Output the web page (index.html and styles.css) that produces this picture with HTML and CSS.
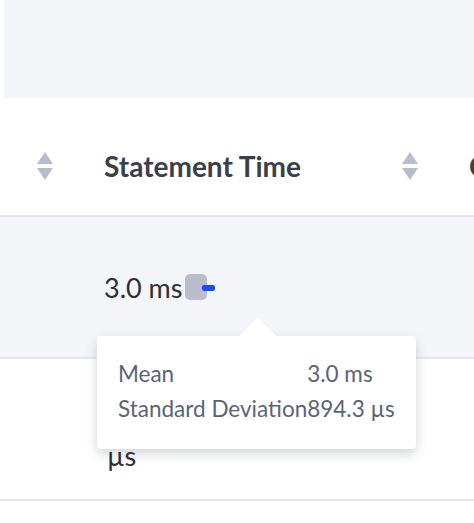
FILE: index.html
```html
<!DOCTYPE html>
<html lang="en">
<head>
    <meta charset="UTF-8">
    <meta name="viewport" content="width=device-width, initial-scale=1.0">
    <title>Statement Time</title>
    <link rel="stylesheet" href="styles.css">
</head>
<body>
    <div class="page-band"></div>

    <div class="stats-table">
        <div class="head-cell">
            <span class="head-label"></span>
            <span class="sort-icon"><span class="sort-up"></span><span class="sort-down"></span></span>
        </div>
        <div class="head-cell">
            <span class="head-label">Statement Time</span>
            <span class="sort-icon"><span class="sort-up"></span><span class="sort-down"></span></span>
        </div>
        <div class="head-cell">
            <span class="head-label">Count</span>
        </div>

        <div class="body-cell shaded"></div>
        <div class="body-cell shaded">
            <div class="bar-value">
                <span>3.0 ms</span>
                <span class="bar-chart"><span class="bar-box"></span><span class="bar-dev"></span></span>
            </div>
            <div class="tooltip">
                <div class="tooltip-row">
                    <span>Mean</span><span>3.0 ms</span>
                    <span>Standard Deviation</span><span>894.3 µs</span>
                </div>
            </div>
        </div>
        <div class="body-cell shaded"></div>

        <div class="body-cell"></div>
        <div class="body-cell">
            <div class="wrap-value">612.8<br>µs</div>
        </div>
        <div class="body-cell"></div>
    </div>
</body>
</html>
```

FILE: styles.css
```css
body {
    margin: 0;
    background-color: #FFFFFF;
    font-family: Lato, 'Open Sans', sans-serif;
    overflow: hidden;
    width: 474px;
    height: 523px;
}

.page-band {
    height: 98px;
    background-color: #F4F5F9;
    margin-left: 4px;
}

.stats-table {
    display: grid;
    grid-template-columns: 80px 365px 120px;
    grid-template-rows: 119px 142px 142px;
}

.head-cell {
    display: flex;
    align-items: center;
    justify-content: space-between;
    padding: 18px 27px 0 24px;
    border-bottom: 2px solid #E4E6EC;
    overflow: hidden;
    white-space: nowrap;
}

.head-label {
    font-size: 28px;
    font-weight: bold;
    color: #3B3F4B;
}

.sort-icon {
    display: flex;
    flex-direction: column;
    gap: 4px;
}

.sort-up,
.sort-down {
    width: 0;
    height: 0;
    border-left: 8px solid transparent;
    border-right: 8px solid transparent;
}

.sort-up {
    border-bottom: 12px solid #B8BCCC;
}

.sort-down {
    border-top: 12px solid #B8BCCC;
}

.body-cell {
    position: relative;
    display: flex;
    align-items: center;
    padding: 0 24px;
    border-bottom: 2px solid #E4E6EC;
    font-size: 27px;
    color: #2E3038;
}

.body-cell.shaded {
    background-color: #F4F5F9;
}

.bar-value {
    display: flex;
    align-items: center;
}

.bar-chart {
    position: relative;
    width: 32px;
    height: 26px;
    margin-left: 2px;
}

.bar-box {
    position: absolute;
    left: 0;
    top: 0;
    width: 22px;
    height: 26px;
    border-radius: 5px;
    background-color: #B9BDCC;
}

.bar-dev {
    position: absolute;
    left: 17px;
    top: 11px;
    width: 13px;
    height: 6px;
    border-radius: 2px;
    background-color: #1B4DFF;
}

.wrap-value {
    line-height: 34px;
    padding: 20px 0 0 3px;
}

.tooltip {
    position: absolute;
    left: 17px;
    top: 119px;
    width: 319px;
    height: 113px;
    box-sizing: border-box;
    padding: 23px 0 0 21px;
    background-color: #FFFFFF;
    border-radius: 4px;
    box-shadow: 0 5px 12px rgba(40, 48, 70, 0.2);
    z-index: 2;
}

.tooltip::before {
    content: '';
    position: absolute;
    left: 148px;
    top: -13px;
    width: 26px;
    height: 26px;
    background-color: #FFFFFF;
    transform: rotate(45deg);
}

.tooltip-row {
    position: relative;
    display: grid;
    grid-template-columns: auto auto;
    justify-content: start;
    row-gap: 5px;
    line-height: 30px;
    font-size: 22.5px;
    color: #5A6377;
    white-space: nowrap;
}
```
